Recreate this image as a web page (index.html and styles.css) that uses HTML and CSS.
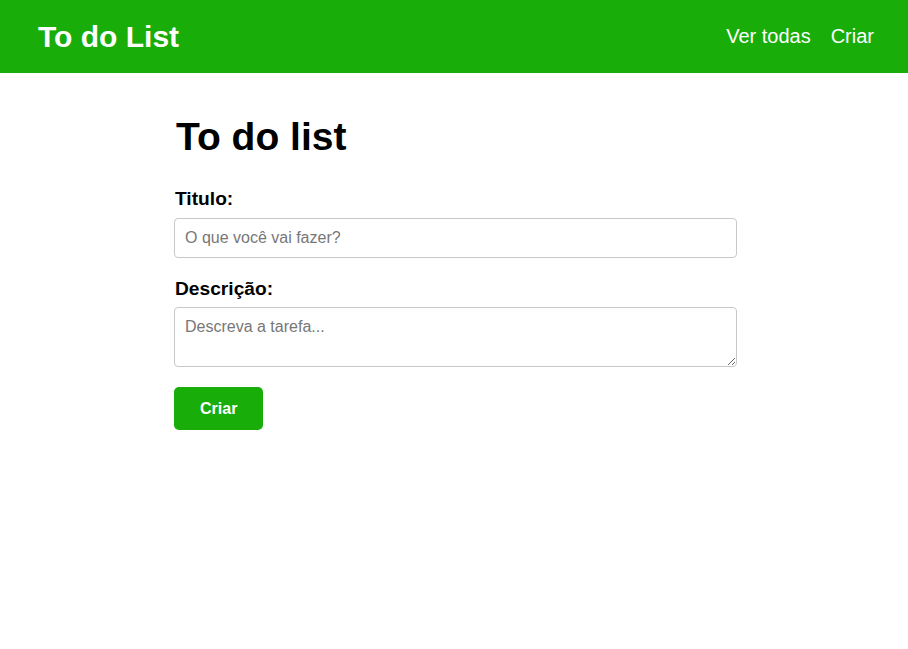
FILE: index.html
```html
<!DOCTYPE html>
<html lang="pt-BR">
<head>
<meta charset="utf-8">
<title>To do List</title>
<link rel="stylesheet" href="styles.css">
</head>
<body>
<header class="topbar">
  <a class="brand" href="#">To do List</a>
  <nav class="nav">
    <a href="#">Ver todas</a>
    <a href="#">Criar</a>
  </nav>
</header>
<main class="container">
  <h1 class="title">To do list</h1>
  <form class="form">
    <div class="field">
      <label class="label" for="titulo">Titulo:</label>
      <input class="input" id="titulo" type="text" placeholder="O que você vai fazer?">
    </div>
    <div class="field field-desc">
      <label class="label" for="descricao">Descrição:</label>
      <textarea class="textarea" id="descricao" placeholder="Descreva a tarefa..."></textarea>
    </div>
    <button class="btn" type="button">Criar</button>
  </form>
</main>
</body>
</html>
```

FILE: styles.css
```css
* { box-sizing: border-box; }
body {
  margin: 0;
  font-family: "Liberation Sans", Arial, sans-serif;
  color: #000;
  background: #fff;
}
.topbar {
  background: #18ad08;
  height: 73px;
  display: flex;
  align-items: center;
  justify-content: space-between;
  padding: 0 34px 0 38px;
}
.brand {
  color: #fff;
  text-decoration: none;
  font-weight: bold;
  font-size: 30px;
}
.nav {
  display: flex;
  gap: 20px;
}
.nav a {
  color: #fff;
  text-decoration: none;
  font-size: 20px;
}
.container {
  width: 563px;
  margin: 0 auto 0 174px;
  padding-top: 41px;
}
.title {
  font-size: 39px;
  margin: 0 0 0 2px;
  line-height: 46px;
}
.form {
  margin-top: 28px;
}
.field {
  display: flex;
  flex-direction: column;
  margin-bottom: 20px;
}
.label {
  font-size: 19.2px;
  font-weight: bold;
  line-height: 22px;
  margin: 0 0 8px 1px;
}
.field-desc .label {
  margin-bottom: 7px;
}
.input, .textarea {
  font-family: "Liberation Sans", Arial, sans-serif;
  font-size: 16px;
  border: 1px solid #c8c8c8;
  border-radius: 4px;
  padding: 10px;
  width: 100%;
}
.input { height: 40px; }
.textarea { height: 60px; display: block; }
.input::placeholder, .textarea::placeholder { color: #777; }
.btn {
  font-family: "Liberation Sans", Arial, sans-serif;
  background: #18ad08;
  color: #fff;
  font-weight: bold;
  font-size: 16px;
  line-height: 19px;
  border: none;
  border-radius: 5px;
  padding: 12px 26px;
  width: 89px;
  height: 43px;
}
```
